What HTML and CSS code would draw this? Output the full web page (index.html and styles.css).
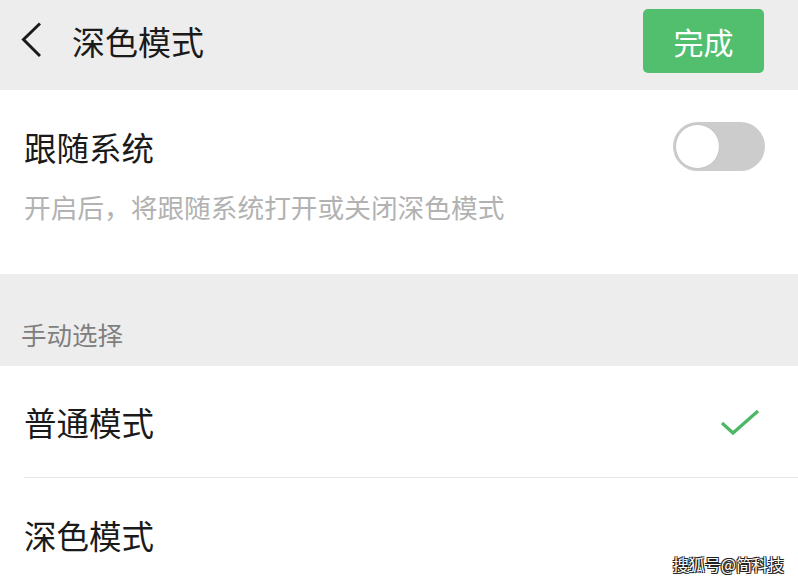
FILE: index.html
```html
<!DOCTYPE html>
<html lang="zh-CN">
<head>
<meta charset="utf-8">
<title>深色模式</title>
<link rel="stylesheet" href="styles.css">
</head>
<body>
<div class="page">
  <header class="topbar">
    <div class="topbar-left">
      <svg class="back" width="20" height="36" viewBox="0 0 20 36"><polyline points="19,1.5 2.5,17.5 19,34" fill="none" stroke="#1a1a1a" stroke-width="3"/></svg>
      <h1 class="title">深色模式</h1>
    </div>
    <button class="done">完成</button>
  </header>

  <section class="card follow">
    <div class="follow-row">
      <span class="label">跟随系统</span>
      <span class="toggle"><span class="knob"></span></span>
    </div>
    <p class="desc">开启后，将跟随系统打开或关闭深色模式</p>
  </section>

  <div class="group-title">手动选择</div>

  <section class="card list">
    <div class="item">
      <span class="label">普通模式</span>
      <svg class="check" width="44" height="32" viewBox="0 0 44 32"><polyline points="4,17 15,27 40,5" fill="none" stroke="#4cb865" stroke-width="3.2"/></svg>
    </div>
    <div class="item last">
      <span class="label">深色模式</span>
    </div>
  </section>

  <div class="watermark">搜狐号@简科技</div>
</div>
</body>
</html>
```

FILE: styles.css
```css
* { box-sizing: border-box; }
html, body { margin: 0; padding: 0; }
body {
  font-family: "Noto Sans CJK SC", "Noto Sans", sans-serif;
  background: #ffffff;
  color: #1a1a1a;
  width: 798px;
  height: 582px;
  overflow: hidden;
}
.page { position: relative; width: 798px; height: 582px; overflow: hidden; }

.topbar {
  height: 90px;
  background: #ededed;
  display: flex;
  justify-content: space-between;
  align-items: flex-start;
  padding: 9px 34px 0 21px;
}
.topbar-left {
  display: flex;
  align-items: center;
  height: 64px;
}
.back { display: block; margin-top: -2px; }
.title {
  margin: 0 0 0 31px;
  font-size: 33px;
  font-weight: 400;
  line-height: 40px;
  color: #1a1a1a;
}
.done {
  width: 121px;
  height: 64px;
  border: none;
  border-radius: 5px;
  background: #52bf6e;
  color: #ffffff;
  font-family: inherit;
  font-size: 30px;
  line-height: 40px;
  padding: 0;
}

.card { background: #ffffff; }
.follow { padding: 32px 33px 48px 24px; height: 184px; }
.follow-row {
  display: flex;
  justify-content: space-between;
  align-items: flex-start;
  height: 54px;
}
.label {
  font-size: 32.5px;
  line-height: 50px;
  color: #1a1a1a;
}
.toggle {
  position: relative;
  width: 92px;
  height: 49px;
  border-radius: 25px;
  background: #cccccc;
  display: block;
}
.knob {
  position: absolute;
  left: 2px;
  top: 2px;
  width: 45px;
  height: 45px;
  border-radius: 50%;
  background: #ffffff;
  border: 1px solid #c4c4c4;
}
.desc {
  margin: 13px 0 0 0;
  font-size: 26.7px;
  line-height: 36px;
  color: #b2b2b2;
}

.group-title {
  height: 92px;
  background: #ededed;
  padding: 42px 0 0 21px;
  font-size: 25.5px;
  line-height: 36px;
  color: #7f7f7f;
}

.list { padding-left: 24px; }
.item {
  height: 112px;
  display: flex;
  align-items: center;
  justify-content: space-between;
  padding-right: 36px;
  border-bottom: 1px solid #e5e5e5;
}
.item.last { border-bottom: none; height: 114px; }
.check { display: block; }

.watermark {
  position: absolute;
  right: 14px;
  bottom: 8px;
  font-size: 16px;
  line-height: 20px;
  font-weight: 400;
  color: #ffffff;
  text-shadow: -1px -1px 0 #222, 1px -1px 0 #222, -1px 1px 0 #222, 1px 1px 0 #222;
}
```
